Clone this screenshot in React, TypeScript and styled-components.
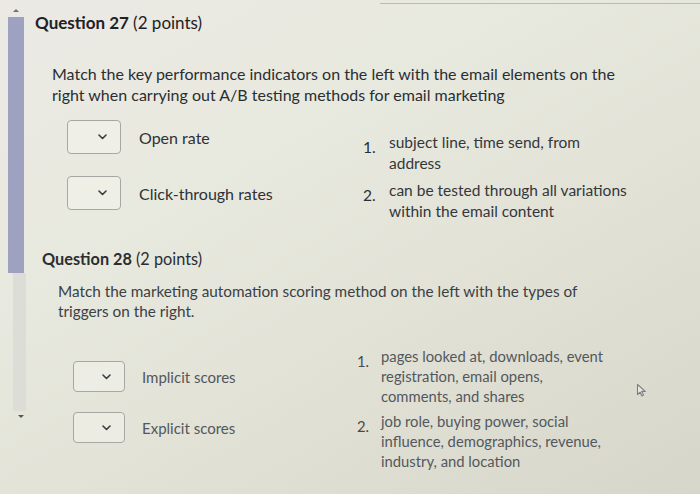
import styled, { createGlobalStyle } from "styled-components"

const GlobalStyle = createGlobalStyle`
  html, body {
    margin: 0;
    padding: 0;
  }
  body {
    font-family: Lato, "Noto Sans", "Liberation Sans", sans-serif;
  }
`

const Page = styled.div`
  /* the quiz page with its scroll track on the left */
  position: relative;
  display: flex;
  width: 700px;
  height: 494px;
  overflow: hidden;
  background: linear-gradient(150deg, #ece9e5 0%, #e8e9de 35%, #e2e2d7 60%, #d6d6ca 100%);
`

const TopEdge = styled.div`
  position: absolute;
  top: 3px;
  left: 380px;
  right: 0;
  height: 1px;
  background: #b9bab2;
`

const ScrollTrack = styled.div`
  display: flex;
  flex-direction: column;
  align-items: center;
  width: 16px;
  height: 412px;
  margin: 6px 0 0 8px;
  flex-shrink: 0;
`

const Arrow = styled.div<{ $down?: boolean }>`
  width: 0;
  height: 0;
  border-left: 3px solid transparent;
  border-right: 3px solid transparent;
  ${(p) =>
    p.$down
      ? "border-top: 3px solid #55565c; margin: 4px 0 0 10px;"
      : "border-bottom: 3px solid #6f7077; margin: 3px 0 5px 0;"}
`

const Thumb = styled.div`
  width: 16px;
  height: 256px;
  background: #9ea1bf;
`

const TrackRest = styled.div`
  flex: 1;
  width: 13px;
  margin-left: 6px;
  background: #dcddd6;
`

const Content = styled.div`
  flex: 1;
  display: flex;
  flex-direction: column;
`

const Section = styled.section<{ $indent: number; $gap: number }>`
  padding-left: ${(p) => p.$indent}px;
  margin-top: ${(p) => p.$gap}px;
`

const Heading = styled.h2<{ $size: number; $color: string }>`
  margin: 0;
  font-size: ${(p) => p.$size}px;
  line-height: 22px;
  font-weight: 700;
  color: ${(p) => p.$color};

  span {
    font-weight: 400;
  }
`

const Prompt = styled.p<{ $size: number; $lh: number; $indent: number; $top: number; $color: string }>`
  margin: ${(p) => p.$top}px 0 0 ${(p) => p.$indent}px;
  font-size: ${(p) => p.$size}px;
  line-height: ${(p) => p.$lh}px;
  color: ${(p) => p.$color};
`

const MatchArea = styled.div<{ $indent: number; $top: number; $leftWidth: number }>`
  display: grid;
  grid-template-columns: ${(p) => p.$leftWidth}px 1fr;
  align-items: start;
  margin: ${(p) => p.$top}px 0 0 ${(p) => p.$indent}px;
`

const LeftList = styled.div<{ $gap: number; $pad: number }>`
  display: flex;
  flex-direction: column;
  gap: ${(p) => p.$gap}px;
  padding-top: ${(p) => p.$pad}px;
`

const LeftRow = styled.div<{ $gap: number }>`
  display: flex;
  align-items: center;
  gap: ${(p) => p.$gap}px;
`

const SelectBox = styled.div<{ $w: number; $h: number }>`
  display: flex;
  align-items: center;
  justify-content: flex-end;
  box-sizing: border-box;
  width: ${(p) => p.$w}px;
  height: ${(p) => p.$h}px;
  padding-right: 13px;
  border: 1px solid #a7a8a3;
  border-radius: 4px;
  background: rgba(246, 246, 240, 0.45);
`

const Label = styled.span<{ $size: number; $color: string }>`
  font-size: ${(p) => p.$size}px;
  color: ${(p) => p.$color};
`

const RightList = styled.ol<{ $gap: number; $pad: number }>`
  display: flex;
  flex-direction: column;
  gap: ${(p) => p.$gap}px;
  margin: 0;
  padding: ${(p) => p.$pad}px 0 0 0;
  list-style: none;
`

const Answer = styled.li<{ $size: number; $lh: number; $color: string; $numWidth: number; $textWidth: number }>`
  display: grid;
  grid-template-columns: ${(p) => p.$numWidth}px ${(p) => p.$textWidth}px;
  font-size: ${(p) => p.$size}px;
  line-height: ${(p) => p.$lh}px;
  color: ${(p) => p.$color};
`

const Num = styled.span<{ $color: string }>`
  padding-top: 5px;
  color: ${(p) => p.$color};
`

const Pointer = styled.svg`
  position: absolute;
  left: 636px;
  top: 383px;
`

const Chevron = () => (
  <svg width="9" height="6" viewBox="0 0 9 6">
    <path d="M1 1l3.5 3.5L8 1" fill="none" stroke="#3a3d42" strokeWidth="1.6" strokeLinecap="round" strokeLinejoin="round" />
  </svg>
)

type Look = {
  indent: number
  gap: number
  head: { size: number; color: string }
  prompt: { size: number; lh: number; indent: number; top: number; color: string }
  area: { indent: number; top: number; leftWidth: number }
  left: { gap: number; pad: number; labelGap: number; w: number; h: number; size: number; color: string }
  right: { gap: number; pad: number; size: number; lh: number; color: string; num: string; numWidth: number; textWidth: number }
}

type QuestionProps = {
  number: number
  points: number
  prompt: string[]
  prompts: string[]
  answers: string[][]
  look: Look
}

const Question = ({ number, points, prompt, prompts, answers, look }: QuestionProps) => (
  <Section $indent={look.indent} $gap={look.gap}>
    <Heading $size={look.head.size} $color={look.head.color}>
      Question {number} <span>({points} points)</span>
    </Heading>
    <Prompt
      $size={look.prompt.size}
      $lh={look.prompt.lh}
      $indent={look.prompt.indent}
      $top={look.prompt.top}
      $color={look.prompt.color}
    >
      {prompt.map((line, i) => (
        <span key={i}>
          {line}
          {i < prompt.length - 1 && <br />}
        </span>
      ))}
    </Prompt>
    <MatchArea $indent={look.area.indent} $top={look.area.top} $leftWidth={look.area.leftWidth}>
      <LeftList $gap={look.left.gap} $pad={look.left.pad}>
        {prompts.map((p) => (
          <LeftRow key={p} $gap={look.left.labelGap}>
            <SelectBox $w={look.left.w} $h={look.left.h}>
              <Chevron />
            </SelectBox>
            <Label $size={look.left.size} $color={look.left.color}>
              {p}
            </Label>
          </LeftRow>
        ))}
      </LeftList>
      <RightList $gap={look.right.gap} $pad={look.right.pad}>
        {answers.map((lines, i) => (
          <Answer
            key={i}
            $size={look.right.size}
            $lh={look.right.lh}
            $color={look.right.color}
            $numWidth={look.right.numWidth}
            $textWidth={look.right.textWidth}
          >
            <Num $color={look.right.num}>{i + 1}.</Num>
            <span>
              {lines.map((line, j) => (
                <span key={j}>
                  {line}
                  {j < lines.length - 1 && <br />}
                </span>
              ))}
            </span>
          </Answer>
        ))}
      </RightList>
    </MatchArea>
  </Section>
)

const look27: Look = {
  indent: 11,
  gap: 12,
  head: { size: 17, color: "#1e2125" },
  prompt: { size: 16, lh: 21, indent: 17, top: 29, color: "#2a2e33" },
  area: { indent: 32, top: 15, leftWidth: 296 },
  left: { gap: 22, pad: 0, labelGap: 18, w: 54, h: 34, size: 16, color: "#2d3136" },
  right: { gap: 6, pad: 12, size: 15.5, lh: 21, color: "#33373c", num: "#2b2e33", numWidth: 26, textWidth: 270 },
}

const look28: Look = {
  indent: 18,
  gap: 26,
  head: { size: 16.3, color: "#2a2d32" },
  prompt: { size: 15.3, lh: 20, indent: 16, top: 11, color: "#3b4045" },
  area: { indent: 31, top: 25, leftWidth: 284 },
  left: { gap: 20, pad: 15, labelGap: 17, w: 52, h: 31, size: 15, color: "#52575c" },
  right: { gap: 5, pad: 0, size: 14.8, lh: 20, color: "#53585d", num: "#45494e", numWidth: 24, textWidth: 260 },
}

const App = () => {
  return (
    <Page>
      <GlobalStyle />
      <TopEdge />
      <ScrollTrack>
        <Arrow />
        <Thumb />
        <TrackRest />
        <Arrow $down />
      </ScrollTrack>
      <Content>
        <Question
          number={27}
          points={2}
          prompt={[
            "Match the key performance indicators on the left with the email elements on the",
            "right when carrying out A/B testing methods for email marketing",
          ]}
          prompts={["Open rate", "Click-through rates"]}
          answers={[
            ["subject line, time send, from", "address"],
            ["can be tested through all variations", "within the email content"],
          ]}
          look={look27}
        />
        <Question
          number={28}
          points={2}
          prompt={[
            "Match the marketing automation scoring method on the left with the types of",
            "triggers on the right.",
          ]}
          prompts={["Implicit scores", "Explicit scores"]}
          answers={[
            ["pages looked at, downloads, event", "registration, email opens,", "comments, and shares"],
            ["job role, buying power, social", "influence, demographics, revenue,", "industry, and location"],
          ]}
          look={look28}
        />
      </Content>
      <Pointer width="12" height="14" viewBox="0 0 12 14">
        <path d="M1.5 1.5v10l2.6-2.4 1.8 3.8 1.6-.8-1.8-3.7h3.6z" fill="#e9e9e2" stroke="#7d7e80" strokeWidth="1.1" strokeLinejoin="round" />
      </Pointer>
    </Page>
  )
}

export default App
